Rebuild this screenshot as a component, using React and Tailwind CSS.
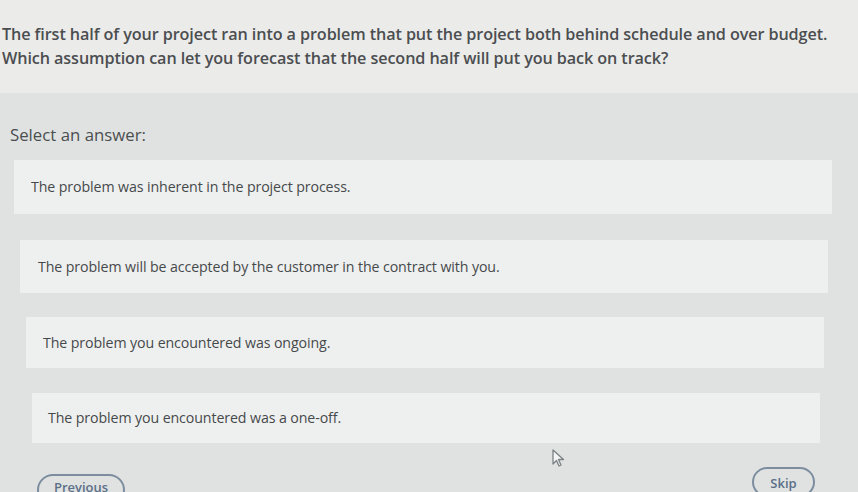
import React from "react";

const answers = [
  { text: "The problem was inherent in the project process.", box: "ml-[14px] mr-[26px] h-[54px]", pad: "pl-[17px]" },
  { text: "The problem will be accepted by the customer in the contract with you.", box: "ml-[20px] mr-[30px] h-[53px] mt-[26px]", pad: "pl-[18px]" },
  { text: "The problem you encountered was ongoing.", box: "ml-[26px] mr-[34px] h-[51px] mt-[24px]", pad: "pl-[17px]" },
  { text: "The problem you encountered was a one-off.", box: "ml-[32px] mr-[38px] h-[50px] mt-[25px]", pad: "pl-[16px]" },
];

const Cursor = () => (
  <svg width="16" height="20" viewBox="0 0 16 20" className="absolute left-[551px] top-[449px]">
    <path d="M2 1 L2 15 L5.5 11.5 L8 17 L10 16 L7.5 10.5 L12.5 10.5 Z" fill="#f3f4f3" stroke="#7c8285" strokeWidth="1.3" strokeLinejoin="round" />
  </svg>
);

export default function App() {
  return (
    <div className="relative w-[858px] h-[492px] overflow-hidden bg-[#dfe2e1] text-[#4b4e50]" style={{ fontFamily: '"Open Sans", "Noto Sans", sans-serif' }}>
      {/* question */}
      <div className="h-[93px] bg-[#ebebea] pt-[22px] pl-[2px]">
        <p className="text-[16.2px] leading-[24px] font-semibold tracking-[-0.1px]">
          The first half of your project ran into a problem that put the project both behind schedule and over budget.
        </p>
        <p className="text-[16.2px] leading-[24px] font-semibold tracking-[-0.1px]">
          Which assumption can let you forecast that the second half will put you back on track?
        </p>
      </div>

      <div className="pt-[31px] pl-[10px] text-[16.8px] leading-[21px]">Select an answer:</div>

      {/* answers */}
      <div className="mt-[15px] flex flex-col">
        {answers.map((a, i) => (
          <div key={i} className={`${a.box} bg-[#eef0ef] flex items-center ${a.pad}`}>
            <span className="text-[14.2px] tracking-[-0.1px] text-[#46494b]">{a.text}</span>
          </div>
        ))}
      </div>

      {/* nav */}
      <div className="mt-[24px] flex justify-between items-start pl-[37px] pr-[43px]">
        <button className="mt-[7px] w-[88px] h-[32px] rounded-full border-2 border-[#7d8da0] text-[#5b6f88] text-[13px] font-semibold pt-[4px] leading-[14px] flex justify-center items-start">
          Previous
        </button>
        <button className="w-[63px] h-[30px] rounded-full border-2 border-[#7d8da0] text-[#5b6f88] text-[13px] font-semibold leading-[14px] flex justify-center items-center pt-[2px]">
          Skip
        </button>
      </div>

      <Cursor />
    </div>
  );
}
